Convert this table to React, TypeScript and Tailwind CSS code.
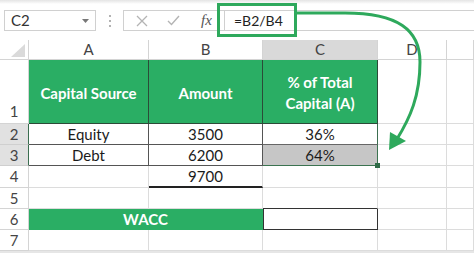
import React from 'react';

const GREEN = 'bg-[#2aae64]';

function Cell({
  className = '',
  line = 'border-[#dcdcdc]',
  children,
}: {
  className?: string;
  line?: string;
  children?: React.ReactNode;
}) {
  return (
    <div className={`flex items-center justify-center border-r border-b text-[15px] text-[#1b1b1b] ${line} ${className}`}>
      {children}
    </div>
  );
}

function RowHead({ n, active = false, tall = false }: { n: number; active?: boolean; tall?: boolean }) {
  return (
    <div
      className={`flex justify-center border-b border-r text-[15px] text-[#444] ${
        active ? 'bg-[#e1e1e1] border-r-[#3b6e50] border-b-[#cfcfcf]' : 'bg-white border-[#d4d4d4]'
      } ${tall ? 'items-end pb-[1px]' : 'items-center'}`}
    >
      {n}
    </div>
  );
}

function ColHead({ label, active = false }: { label?: string; active?: boolean }) {
  return (
    <div
      className={`flex items-center justify-center border-r border-b border-[#d4d4d4] text-[15px] text-[#444] ${
        active ? 'bg-[#d9d9d9]' : 'bg-white'
      }`}
    >
      {label}
    </div>
  );
}

function FormulaBar() {
  return (
    <div className="flex h-[36px] items-start pt-[6px]">
      {/* name box */}
      <div className="ml-[4px] flex h-[21px] w-[92px] items-center justify-between border border-[#d0d0d0] pl-[6px] pr-[6px] text-[15px] text-[#333]">
        <span>C2</span>
        <svg width="7" height="4" viewBox="0 0 7 4">
          <path d="M0 0 H7 L3.5 4 Z" fill="#777" />
        </svg>
      </div>
      <div className="flex h-[21px] w-[27px] flex-col items-center justify-center gap-[3px]">
        <span className="h-[2px] w-[2px] rounded-full bg-[#999]" />
        <span className="h-[2px] w-[2px] rounded-full bg-[#999]" />
        <span className="h-[2px] w-[2px] rounded-full bg-[#999]" />
      </div>
      {/* formula box */}
      <div className="flex h-[21px] flex-1 items-center border-y border-l border-[#d0d0d0]">
        <div className="flex w-[100px] items-center">
          <svg className="ml-[12px]" width="12" height="12" viewBox="0 0 12 12">
            <path d="M1 1 L11 11 M11 1 L1 11" stroke="#b4b4b4" strokeWidth="1.3" />
          </svg>
          <svg className="ml-[19px]" width="13" height="11" viewBox="0 0 13 11">
            <path d="M1 6 L4.5 9.5 L12 1" stroke="#b4b4b4" strokeWidth="1.4" fill="none" />
          </svg>
          <span className="ml-[21px] text-[15px] italic text-[#555] [font-family:'Liberation_Serif',serif]">
            fx
          </span>
        </div>
        <div className="flex h-full flex-1 items-center border-l border-[#d0d0d0] pl-[9px] text-[14px] text-[#222]">
          =B2/B4
        </div>
      </div>
    </div>
  );
}

export default function App() {
  return (
    <div className="relative h-[253px] w-[474px] overflow-hidden bg-white [font-family:Lato,'Liberation_Sans',sans-serif]">
      <div className="h-[4px] bg-gradient-to-b from-[#e4e4e4] to-white" />
      <FormulaBar />

      <div className="grid grid-cols-[29px_120px_114px_115px_69px_1fr] grid-rows-[20px_64px_21px_21px_22px_21px_21px_21px]">
        {/* column headers */}
        <div className="flex items-end justify-end border-r border-b border-[#d4d4d4] pb-[2px] pr-[3px]">
          <svg width="14" height="13" viewBox="0 0 14 13">
            <path d="M14 0 V13 H0 Z" fill="#dadada" />
          </svg>
        </div>
        <ColHead label="A" />
        <ColHead label="B" />
        <ColHead label="C" active />
        <ColHead label="D" />
        <ColHead />

        {/* row 1 */}
        <RowHead n={1} tall />
        <Cell line="border-[#2c4a38]" className={`${GREEN} pt-[3px] font-bold text-white`}>
          Capital Source
        </Cell>
        <Cell line="border-[#2c4a38]" className={`${GREEN} pt-[3px] font-bold text-white`}>
          Amount
        </Cell>
        <Cell line="border-[#2c4a38]" className={`${GREEN} pt-[3px] text-center font-bold leading-[21px] text-white`}>
          % of Total
          <br />
          Capital (A)
        </Cell>
        <Cell />
        <Cell />

        {/* row 2 */}
        <RowHead n={2} active />
        <Cell line="border-[#555]">Equity</Cell>
        <Cell line="border-[#555]">3500</Cell>
        <Cell line="border-r-[#3b6e50] border-b-[#666]">36%</Cell>
        <Cell />
        <Cell />

        {/* row 3 */}
        <RowHead n={3} active />
        <Cell line="border-[#555]">Debt</Cell>
        <Cell line="border-[#555]">6200</Cell>
        <div className="relative flex items-center justify-center border-r border-b border-[#3b7350] bg-[#c6c6c6] text-[15px] text-[#1b1b1b]">
          64%
          <span className="absolute -bottom-[3px] -right-[3px] h-[5px] w-[5px] bg-[#2f6b47]" />
        </div>
        <Cell />
        <Cell />

        {/* row 4 */}
        <RowHead n={4} />
        <Cell />
        <Cell line="border-r-[#dcdcdc] border-b-[#222]" className="border-b-[2px]">
          9700
        </Cell>
        <Cell />
        <Cell />
        <Cell />

        {/* row 5 */}
        <RowHead n={5} />
        <Cell />
        <Cell />
        <Cell line="border-r-[#dcdcdc] border-b-[#333]" />
        <Cell />
        <Cell />

        {/* row 6 */}
        <RowHead n={6} />
        <Cell line="border-[#2aae64]" className={`${GREEN} col-span-2 font-bold text-white`}>
          WACC
        </Cell>
        <Cell line="border-[#333]" className="border-l" />
        <Cell />
        <Cell />

        {/* row 7 */}
        <RowHead n={7} />
        <Cell />
        <Cell />
        <Cell />
        <Cell />
        <Cell />
      </div>
      <div className="h-[2px] bg-[#e6e6e6]" />

      {/* callout: formula box outline and arrow to the result cells */}
      <div className="pointer-events-none absolute left-[217px] top-[3px] h-[34px] w-[80px] border-[3px] border-[#2ea95c]" />
      <svg className="pointer-events-none absolute left-0 top-0" width="474" height="253" viewBox="0 0 474 253">
        <path
          d="M297 13 L345 13 C398 13 420 30 420 62 C420 96 410 118 397 139"
          fill="none"
          stroke="#2ea95c"
          strokeWidth="3"
        />
        <path d="M389 150 L390 132 L406 141 Z" fill="#2ea95c" />
      </svg>
    </div>
  );
}
